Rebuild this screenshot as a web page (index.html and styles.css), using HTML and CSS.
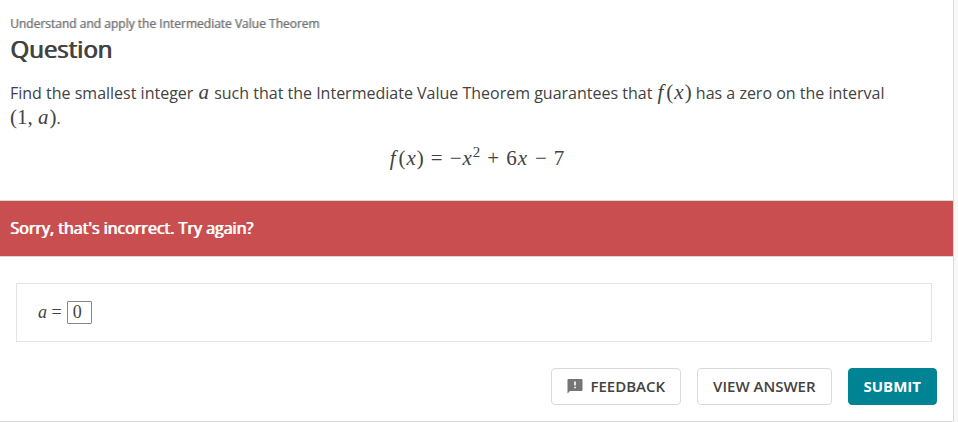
FILE: index.html
```html
<!DOCTYPE html>
<html lang="en">
<head>
<meta charset="utf-8">
<title>Question</title>
<link rel="stylesheet" href="styles.css">
</head>
<body>
<main class="card">
  <section class="prompt">
    <p class="skill">Understand and apply the Intermediate Value Theorem</p>
    <h1 class="title">Question</h1>
    <p class="text">Find the smallest integer <span class="math"><i>a</i></span> such that the Intermediate Value Theorem guarantees that <span class="math"><i class="fn">f</i>(<i>x</i>)</span> has a zero on the interval <span class="math">(1,&#8201;<i>a</i>)</span>.</p>
    <p class="equation math"><span><i class="fn">f</i>(<i>x</i>)</span><span>=</span><span>−<i>x</i><sup>2</sup></span><span>+</span><span>6<i>x</i></span><span>−</span><span>7</span></p>
  </section>
  <p class="alert" role="alert">Sorry, that's incorrect. Try again?</p>
  <form class="answer">
    <div class="answer-box">
      <label class="answer-label" for="answer"><i>a</i> =</label>
      <input class="answer-input" id="answer" type="text" value="0">
    </div>
    <div class="actions">
      <button class="button" type="button">
        <svg class="icon" viewBox="0 0 16 16" aria-hidden="true"><path fill="#757575" d="M1.500 1h13a1 1 0 0 1 1 1v10a1 1 0 0 1-1 1H3L.5 15.500V2a1 1 0 0 1 1-1z"/><path fill="#fff" d="M7.200 3.500h1.600v4H7.200zM7.200 8.700h1.600v1.600H7.200z"/></svg>
        FEEDBACK
      </button>
      <button class="button" type="button">VIEW ANSWER</button>
      <button class="button primary" type="submit">SUBMIT</button>
    </div>
  </form>
</main>
</body>
</html>
```
FILE: styles.css
```css
* { box-sizing: border-box; }
body {
  margin: 0;
  background: #f8f8f8;
  color: #424242;
  font-family: "Open Sans", sans-serif;
  font-size: 16px;
}
p, h1 { margin: 0; }
.card {
  margin-right: 4px;
  background: #fff;
  border: solid #d8dada;
  border-width: 0 1px 1px 0;
  border-bottom-right-radius: 2px;
}
.prompt { padding: 16px 10px 30px; }
.skill {
  color: #757575;
  font-size: 12px;
  line-height: 16px;
  text-shadow: 1px 0 #75757580;
}
.title {
  font-size: 24px;
  font-weight: 400;
  line-height: 34px;
  text-shadow: 1px 0 currentColor;
}
.text {
  margin-top: 14px;
  padding-right: 32px;
  line-height: 24px;
}
.math {
  font-family: "Liberation Serif", serif;
  font-size: 21px;
  line-height: 24px;
}
.math i { margin: 0 1px; }
.math .fn { margin-right: 3px; }
.equation {
  display: flex;
  justify-content: center;
  gap: 7px;
  margin-top: 16px;
}
.equation sup {
  font-size: 15px;
  line-height: 0;
}
.alert {
  padding: 16px 10px;
  border: solid #d8dada;
  border-width: 1px 0;
  background: #c94e50;
  color: #fff;
  line-height: 23px;
  text-shadow: 1px 0 currentColor;
}
.answer { padding: 26px 16px 16px; }
.answer-box {
  display: flex;
  align-items: center;
  gap: 5px;
  margin-right: 5px;
  padding: 17px 21px;
  border: 1px solid #e4e4e4;
  font-family: "Liberation Serif", serif;
  font-size: 18px;
}
.answer-input {
  width: 25px;
  height: 23px;
  padding: 0 5px;
  border: 1px solid #888;
  border-radius: 1px;
  background: #fff;
  color: #424242;
  font: inherit;
}
.actions {
  display: flex;
  justify-content: flex-end;
  gap: 16px;
  margin-top: 26px;
}
.button {
  display: flex;
  align-items: center;
  gap: 7px;
  height: 37px;
  padding: 0 15px 2px;
  border: 1px solid #d8dada;
  border-radius: 4px;
  background: #fff;
  color: #424242;
  font-family: inherit;
  font-size: 15px;
  font-weight: 600;
}
.primary {
  border-color: #008392;
  background: #008392;
  color: #fff;
  font-weight: 700;
}
.icon {
  width: 16px;
  height: 16px;
}
```
